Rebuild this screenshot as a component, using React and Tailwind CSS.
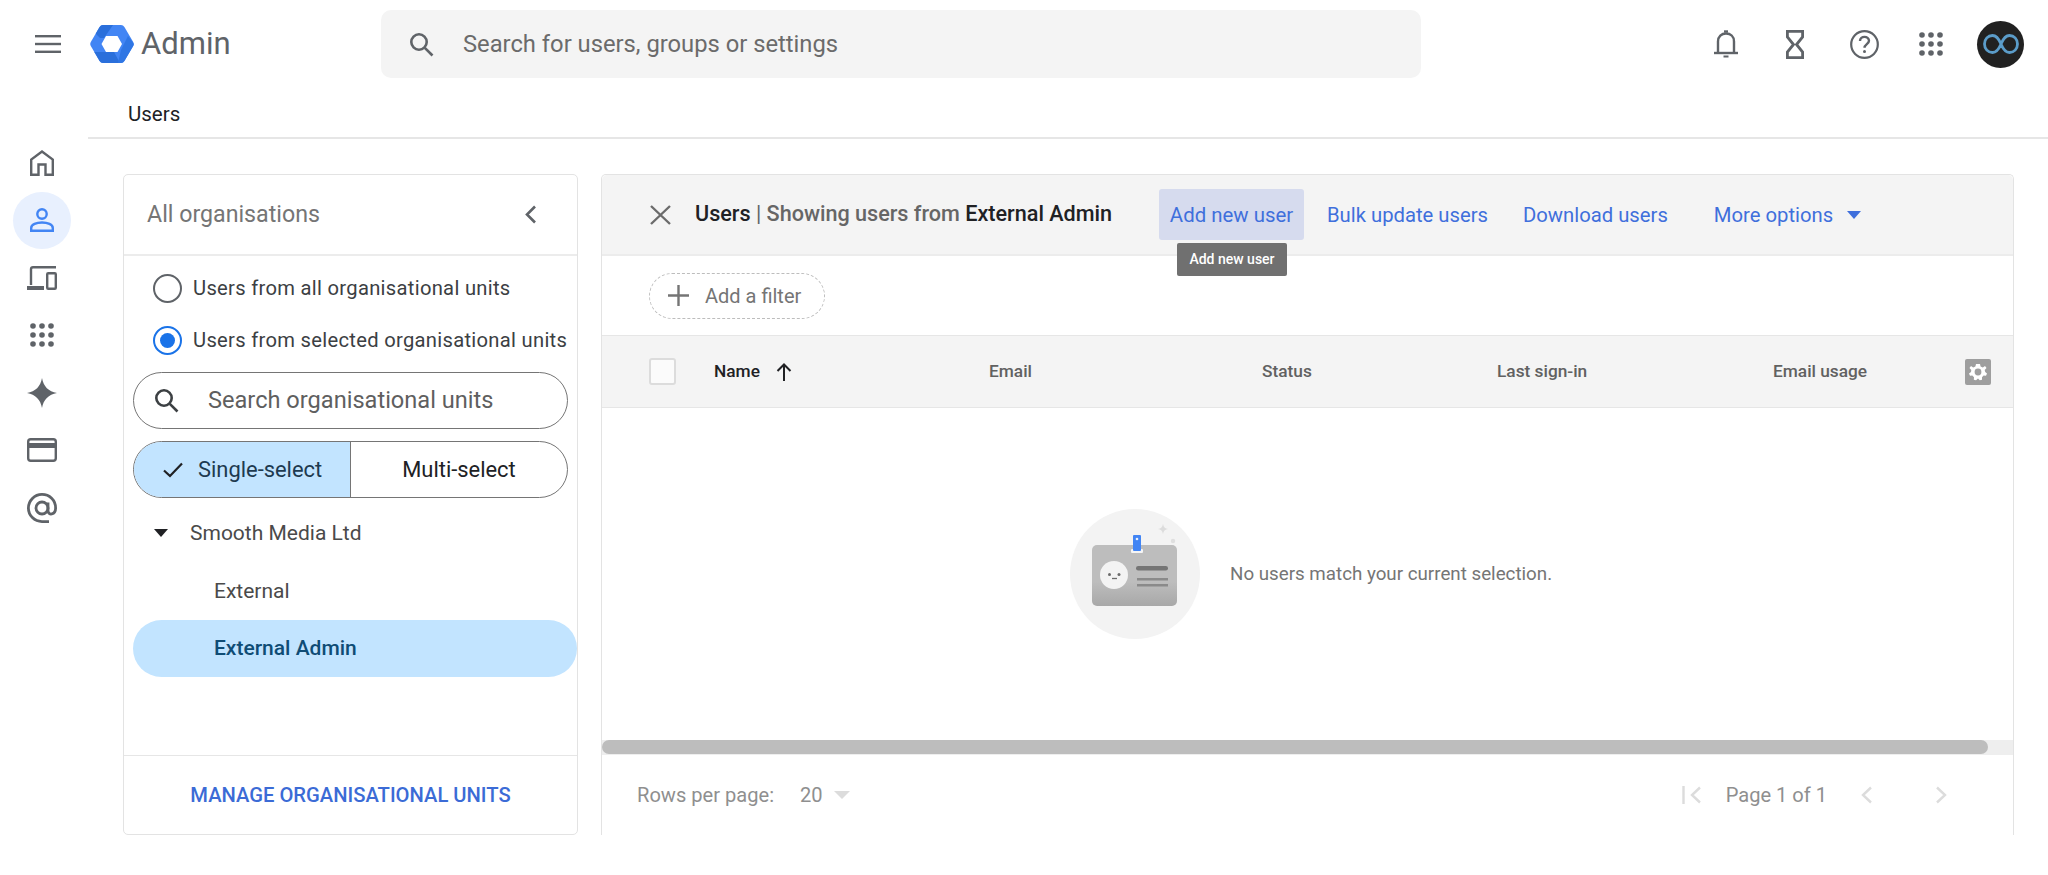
import React from 'react';

const roboto = { fontFamily: 'Roboto, sans-serif' };

function Logo() {
  return (
    <svg width="44" height="38" viewBox="0 0 44 38">
      <defs>
        <clipPath id="hexClip">
          <path d="M0.800 17 L9.600 2 Q10.800 0 13 0 H31 Q33.200 0 34.400 2 L43.200 17 Q44.300 19 43.200 21 L34.400 36 Q33.200 38 31 38 H13 Q10.800 38 9.600 36 L0.800 21 Q-0.300 19 0.800 17Z" />
        </clipPath>
      </defs>
      <g clipPath="url(#hexClip)">
        <rect width="44" height="38" fill="#4285f4" />
        <path d="M9 0 H23 L14 13 L10 13 L5 8 Z" fill="#2a6fdb" />
        <path d="M0 38 V27 L13 27 H24 L30 38 Z" fill="#2a6fdb" />
        <path d="M31 25 L38 11 L44 19 V24 L34 38 H28 Z" fill="#2f76e4" />
      </g>
      <path d="M16 11 H27.500 L32 19 L27.500 27 H16 L11.500 19 Z" fill="#fff" />
    </svg>
  );
}

function SearchIcon({ size = 25, color = '#5f6368' }) {
  return (
    <svg width={size} height={size} viewBox="0 0 25 25" fill="none" stroke={color} strokeWidth="2.600">
      <circle cx="10" cy="10" r="7.700" />
      <path d="M15.800 15.800 L23.500 23.500" />
    </svg>
  );
}

function Dots({ color = '#5f6368' }) {
  const pts = [3, 12, 21];
  return (
    <svg width="24" height="24" viewBox="0 0 24 24" fill={color}>
      {pts.map((y) => pts.map((x) => <circle key={`${x}-${y}`} cx={x} cy={y} r="2.800" />))}
    </svg>
  );
}

function TopBar() {
  return (
    <div className="flex items-center h-[88px]">
      <svg className="ml-[35px]" width="26" height="18" viewBox="0 0 26 18" fill="#5f6368">
        <rect width="26" height="2.400" />
        <rect y="7.800" width="26" height="2.400" />
        <rect y="15.600" width="26" height="2.400" />
      </svg>
      <div className="ml-[29px]"><Logo /></div>
      <span className="ml-[7px] pt-[1px] text-[31px] text-[#5f6368] w-[240px]">Admin</span>
      <div className="flex items-center w-[1040px] h-[68px] rounded-[10px] bg-[#f4f4f4] pl-[28px]">
        <SearchIcon />
        <span className="ml-[29px] pt-[1px] text-[23.750px] text-[#6b6b6b]">Search for users, groups or settings</span>
      </div>
      <div className="flex items-center ml-[293px]">
        <svg width="24" height="28" viewBox="0 0 24 28" fill="none" stroke="#5f6368" strokeWidth="2.400">
          <path d="M4 23 V11.500 C4 6.500 7.500 3.500 12 3.500 C16.500 3.500 20 6.500 20 11.500 V23" />
          <path d="M0 23 H24" />
          <path d="M10 1.500 H14" />
          <path d="M9.500 26.500 H14.500" strokeWidth="2" />
        </svg>
        <svg className="ml-[48px]" width="18" height="29" viewBox="0 0 18 29" fill="none" stroke="#5f6368" strokeWidth="2.800">
          <path d="M1.400 1.400 H16.600 V7 L10.500 14.500 L16.600 22 V27.600 H1.400 V22 L7.500 14.500 L1.400 7 Z" />
        </svg>
        <svg className="ml-[46px]" width="29" height="29" viewBox="0 0 29 29" fill="none" stroke="#5f6368" strokeWidth="2.200">
          <circle cx="14.500" cy="14.500" r="13.300" />
          <path d="M10 11 C10 5.500 19 5.500 19 10.800 C19 14 14.500 14.300 14.500 17.800" strokeWidth="2.400" />
          <circle cx="14.500" cy="21.500" r="1.500" fill="#5f6368" stroke="none" />
        </svg>
        <div className="ml-[40px]"><Dots /></div>
        <div className="ml-[34px] flex items-center justify-center w-[47px] h-[47px] rounded-full bg-[#212121]">
          <svg width="36" height="20" viewBox="0 0 36 20" fill="none" stroke="#5b9cc9" strokeWidth="2.800">
            <path d="M18 10 C15.500 4 12.500 1.500 9.500 1.500 C5 1.500 1.500 5 1.500 10 C1.500 15 5 18.500 9.500 18.500 C12.500 18.500 15.500 16 18 10 C20.500 4 23.500 1.500 26.500 1.500 C31 1.500 34.500 5 34.500 10 C34.500 15 31 18.500 26.500 18.500 C23.500 18.500 20.500 16 18 10 Z" />
          </svg>
        </div>
      </div>
    </div>
  );
}

function NavItem({ active, children }) {
  return (
    <div className={`flex items-center justify-center w-[58px] h-[57.500px] ${active ? 'rounded-full bg-[#e8f0fe]' : ''}`}>
      {children}
    </div>
  );
}

function SideNav() {
  const stroke = '#5f6368';
  return (
    <div className="w-[88px] shrink-0 pt-[46px] pl-[13px]">
      <NavItem>
        <svg width="24" height="26" viewBox="0 0 24 26" fill="none" stroke={stroke} strokeWidth="2.400">
          <path d="M1.200 24.800 V9.500 L12 1.500 L22.800 9.500 V24.800 H15.500 V14.500 H8.500 V24.800 Z" />
        </svg>
      </NavItem>
      <NavItem active>
        <svg width="24" height="24" viewBox="0 0 24 24" fill="none" stroke="#4285f4" strokeWidth="2.400">
          <circle cx="12" cy="6" r="4.700" />
          <path d="M1.200 22.800 V20 C1.200 16.500 6.500 14.500 12 14.500 C17.500 14.500 22.800 16.500 22.800 20 V22.800 Z" />
        </svg>
      </NavItem>
      <NavItem>
        <svg width="30" height="24" viewBox="0 0 30 24" fill="none" stroke={stroke}>
          <path d="M29 1.200 H6 Q4 1.200 4 3.200 V19" strokeWidth="2.400" />
          <path d="M0 22 H17" strokeWidth="4" />
          <rect x="20.200" y="7.200" width="8.600" height="15.600" rx="1" strokeWidth="2.400" />
        </svg>
      </NavItem>
      <NavItem><Dots /></NavItem>
      <NavItem>
        <svg width="30" height="30" viewBox="0 0 30 30" fill={stroke}>
          <path d="M15 0 C16.500 8.500 21.500 13.500 30 15 C21.500 16.500 16.500 21.500 15 30 C13.500 21.500 8.500 16.500 0 15 C8.500 13.500 13.500 8.500 15 0 Z" />
        </svg>
      </NavItem>
      <NavItem>
        <svg width="30" height="24" viewBox="0 0 30 24" fill="none" stroke={stroke} strokeWidth="2.400">
          <rect x="1.200" y="1.200" width="27.600" height="21.600" rx="2.500" />
          <rect x="1.200" y="5" width="27.600" height="5" fill={stroke} stroke="none" />
        </svg>
      </NavItem>
      <NavItem>
        <svg width="30" height="30" viewBox="0 0 30 30" fill="none" stroke={stroke} strokeWidth="2.800">
          <circle cx="15" cy="15" r="6" />
          <path d="M21 9.500 V17.500 C21 23 28.600 22 28.600 15 C28.600 7 22.500 1.400 15 1.400 C7.500 1.400 1.400 7.500 1.400 15 C1.400 22.500 7.500 28.600 15 28.600 H22" />
        </svg>
      </NavItem>
    </div>
  );
}

function Radio({ checked, label }) {
  return (
    <div className="flex items-center h-[52px] pl-[29px]">
      <span className={`flex items-center justify-center w-[29px] h-[29px] rounded-full border-[2.500px] ${checked ? 'border-[#1a73e8]' : 'border-[#5f6368]'}`}>
        {checked && <span className="w-[15px] h-[15px] rounded-full bg-[#1a73e8]" />}
      </span>
      <span className="ml-[11px] text-[20.200px] tracking-[0.290px] text-[#3c4043] whitespace-nowrap">{label}</span>
    </div>
  );
}

function OrgPanel() {
  return (
    <div className="flex flex-col w-[455px] h-[661px] bg-white border border-[#e3e3e3] rounded-[5px]">
      <div className="flex items-center justify-between h-[81px] pl-[23px] pr-[40px] border-b-2 border-[#ececec] shrink-0">
        <span className="text-[23.200px] text-[#757575]">All organisations</span>
        <svg width="13" height="19" viewBox="0 0 13 19" fill="none" stroke="#5f6368" strokeWidth="2.600">
          <path d="M11 1.500 L3 9.500 L11 17.500" />
        </svg>
      </div>
      <div className="pt-[6px]">
        <Radio label="Users from all organisational units" />
        <Radio checked label="Users from selected organisational units" />
      </div>
      <div className="flex items-center mt-[6px] ml-[9px] w-[435px] h-[57px] rounded-full border border-[#757575] pl-[20px]">
        <SearchIcon color="#3c4043" />
        <span className="ml-[29px] text-[23.600px] text-[#5f5f5f]">Search organisational units</span>
      </div>
      <div className="flex mt-[12px] ml-[9px] w-[435px] h-[57px] rounded-full border border-[#757575] overflow-hidden">
        <div className="flex items-center w-[217px] bg-[#c2e4ff] border-r border-[#757575] pl-[29px] pt-[1px]">
          <svg width="20" height="16" viewBox="0 0 20 16" fill="none" stroke="#202124" strokeWidth="2.200">
            <path d="M1 8.500 L7 14 L19 1.500" />
          </svg>
          <span className="ml-[15px] text-[21.900px] font-[450] text-[#1d3a50]">Single-select</span>
        </div>
        <div className="flex flex-1 items-center justify-center pt-[1px] text-[21.900px] font-[450] text-[#202124]">Multi-select</div>
      </div>
      <div className="flex items-center h-[58px] mt-[6px] pl-[30px]">
        <svg width="14" height="8" viewBox="0 0 14 8" fill="#202124"><path d="M0 0 H14 L7 8 Z" /></svg>
        <span className="ml-[22px] pt-[1px] text-[21px] text-[#4a4a4a]">Smooth Media Ltd</span>
      </div>
      <div className="flex items-center h-[58px] pl-[90px] pt-[1px] text-[21px] text-[#4a4a4a]">External</div>
      <div className="flex items-center ml-[9px] h-[57px] rounded-l-full rounded-r-full bg-[#c2e4ff] pl-[81px] text-[21px] font-medium text-[#0f4c75]">
        External Admin
      </div>
      <div className="flex-1" />
      <div className="flex items-center justify-center h-[79px] border-t border-[#e6e6e6] text-[20.200px] font-medium text-[#3b6bd6] shrink-0">
        MANAGE ORGANISATIONAL UNITS
      </div>
    </div>
  );
}

function EmptyCard() {
  return (
    <svg width="130" height="130" viewBox="0 0 130 130">
      <defs>
        <linearGradient id="cardFade" x1="0" y1="0" x2="0" y2="1">
          <stop offset="0.600" stopColor="#bdbdbd" />
          <stop offset="1" stopColor="#a8a8a8" />
        </linearGradient>
      </defs>
      <circle cx="65" cy="65" r="65" fill="#f3f3f3" />
      <path d="M93 15 C93.500 18 95 19.500 98 20 C95 20.500 93.500 22 93 25 C92.500 22 91 20.500 88 20 C91 19.500 92.500 18 93 15 Z" fill="#dcdcdc" />
      <circle cx="103" cy="32" r="2.200" fill="#dfdfdf" />
      <rect x="22" y="36" width="85" height="61" rx="5" fill="url(#cardFade)" />
      <rect x="61" y="40" width="12" height="4" rx="1" fill="#f5f5f5" />
      <rect x="63" y="26" width="8" height="16" rx="1" fill="#4285f4" />
      <circle cx="67" cy="30" r="1.300" fill="#e8f0fe" />
      <circle cx="44" cy="66" r="14" fill="#f3f3f3" />
      <circle cx="39.500" cy="65.500" r="1.500" fill="#6b6b6b" />
      <circle cx="49" cy="65.500" r="1.500" fill="#6b6b6b" />
      <path d="M42 69.500 H47" stroke="#6b6b6b" strokeWidth="1.300" />
      <rect x="66" y="57" width="32" height="4.500" rx="2.200" fill="#757575" />
      <rect x="67" y="69" width="31" height="2.500" fill="#8a8a8a" />
      <rect x="67" y="75" width="31" height="2.500" fill="#8a8a8a" />
    </svg>
  );
}

function UsersPanel() {
  return (
    <div className="relative flex flex-col w-[1413px] h-[661px] bg-white border-x border-t border-[#e3e3e3] rounded-t-[5px]">
      <div className="flex items-center h-[81px] bg-[#f4f4f4] border-b-2 border-[#ececec] shrink-0 rounded-t-[5px]">
        <svg className="ml-[48px]" width="21" height="20" viewBox="0 0 21 20" fill="none" stroke="#6b6b6b" strokeWidth="2.400">
          <path d="M1 1 L20 19 M20 1 L1 19" />
        </svg>
        <div className="ml-[24px] w-[464px] text-[21.600px] whitespace-nowrap">
          <span className="font-medium text-[#202124]">Users</span>
          <span className="text-[#5f6368]"> | </span>
          <span className="font-medium text-[#666]">Showing users from </span>
          <span className="font-medium text-[#202124]">External Admin</span>
        </div>
        <div className="relative flex items-center justify-center w-[145px] h-[51px] rounded-[3px] bg-[#d6dbee] pt-[1px] text-[20.400px] text-[#3f6fdc]">
          Add new user
          <div className="absolute top-[54px] left-[18px] flex items-center justify-center w-[110px] h-[33px] rounded-[2px] bg-[#707070] text-[14px] font-medium text-white z-10">
            Add new user
          </div>
        </div>
        <span className="ml-[23px] pt-[1px] text-[20.250px] text-[#3f6fdc]">Bulk update users</span>
        <span className="ml-[35px] pt-[1px] text-[20.250px] text-[#3f6fdc]">Download users</span>
        <span className="ml-[46px] pt-[1px] text-[20.250px] text-[#3f6fdc]">More options</span>
        <svg className="ml-[14px]" width="14" height="8" viewBox="0 0 14 8" fill="#3f6fdc"><path d="M0 0 H14 L7 8 Z" /></svg>
      </div>
      <div className="flex items-center h-[79px] pl-[47px] shrink-0">
        <div className="flex items-center w-[176px] h-[46px] rounded-full border border-dashed border-[#bdbdbd] pl-[18px]">
          <svg width="21" height="21" viewBox="0 0 21 21" stroke="#757575" strokeWidth="2.400"><path d="M10.500 0 V21 M0 10.500 H21" /></svg>
          <span className="ml-[16px] text-[20px] text-[#757575]">Add a filter</span>
        </div>
      </div>
      <div className="flex items-center h-[73px] bg-[#f4f4f4] border-y border-[#e6e6e6] pl-[47px] text-[17.300px] font-medium text-[#616161] shrink-0">
        <div className="w-[65px]">
          <div className="w-[27px] h-[27px] rounded-[3px] border-2 border-[#dcdcdc] bg-white/60" />
        </div>
        <div className="flex items-center w-[275px] text-[#202124]">
          Name
          <svg className="ml-[16px]" width="16" height="18" viewBox="0 0 16 18" fill="none" stroke="#202124" strokeWidth="2">
            <path d="M8 18 V2 M1.500 8 L8 1.500 L14.500 8" />
          </svg>
        </div>
        <div className="w-[273px]">Email</div>
        <div className="w-[235px]">Status</div>
        <div className="w-[276px]">Last sign-in</div>
        <div className="w-[192px]">Email usage</div>
        <svg width="26" height="26" viewBox="0 0 26 26">
          <rect width="26" height="26" rx="2" fill="#9e9e9e" />
          <path d="M13 5 L15 5 L15.600 7.600 L17.800 8.500 L20 7 L21.500 9 L19.700 11 L20.200 13 L22 14.500 L21 16.800 L18.600 16.500 L17 18.300 L17 20.800 L14.800 21.300 L13 19.500 L11 21.300 L8.800 20.800 L9 18.300 L7.300 16.500 L5 16.800 L4 14.500 L6 13 L6.300 11 L4.500 9 L6 7 L8.200 8.500 L10.400 7.600 L11 5 Z" fill="#fff" />
          <circle cx="13" cy="13" r="3.400" fill="#9e9e9e" />
        </svg>
      </div>
      <div className="flex flex-1 items-center pl-[468px]">
        <EmptyCard />
        <span className="ml-[30px] text-[18.750px] text-[#757575]">No users match your current selection.</span>
      </div>
      <div className="flex h-[15px] bg-[#eeeeee] shrink-0">
        <div className="w-[1386px] h-[14px] rounded-full bg-[#bdbdbd]" />
      </div>
      <div className="flex items-center h-[80px] pl-[35px] text-[20.100px] text-[#8f8f8f] shrink-0">
        <span>Rows per page:</span>
        <span className="ml-[26px]">20</span>
        <svg className="ml-[11px]" width="16" height="8" viewBox="0 0 16 8" fill="#dcdcdc"><path d="M0 0 H16 L8 8 Z" /></svg>
        <svg className="ml-[832px]" width="20" height="18" viewBox="0 0 20 18" fill="none" stroke="#dcdcdc" strokeWidth="2.400">
          <path d="M1.500 0 V18 M18 1.500 L10 9 L18 16.500" />
        </svg>
        <span className="ml-[24px]">Page 1 of 1</span>
        <svg className="ml-[34px]" width="11" height="18" viewBox="0 0 11 18" fill="none" stroke="#dcdcdc" strokeWidth="2.400">
          <path d="M10 1.500 L2 9 L10 16.500" />
        </svg>
        <svg className="ml-[64px]" width="11" height="18" viewBox="0 0 11 18" fill="none" stroke="#dcdcdc" strokeWidth="2.400">
          <path d="M1 1.500 L9 9 L1 16.500" />
        </svg>
      </div>
    </div>
  );
}

export default function App() {
  return (
    <div className="w-[2048px] h-[875px] overflow-hidden bg-white" style={roboto}>
      <TopBar />
      <div className="flex">
        <SideNav />
        <div className="flex-1">
          <div className="flex items-center h-[51px] pl-[40px] pt-[3px] border-b-2 border-[#e6e6e6] text-[20.500px] text-[#202124]">
            Users
          </div>
          <div className="flex gap-[23px] pl-[35px] pt-[35px]">
            <OrgPanel />
            <UsersPanel />
          </div>
        </div>
      </div>
    </div>
  );
}
